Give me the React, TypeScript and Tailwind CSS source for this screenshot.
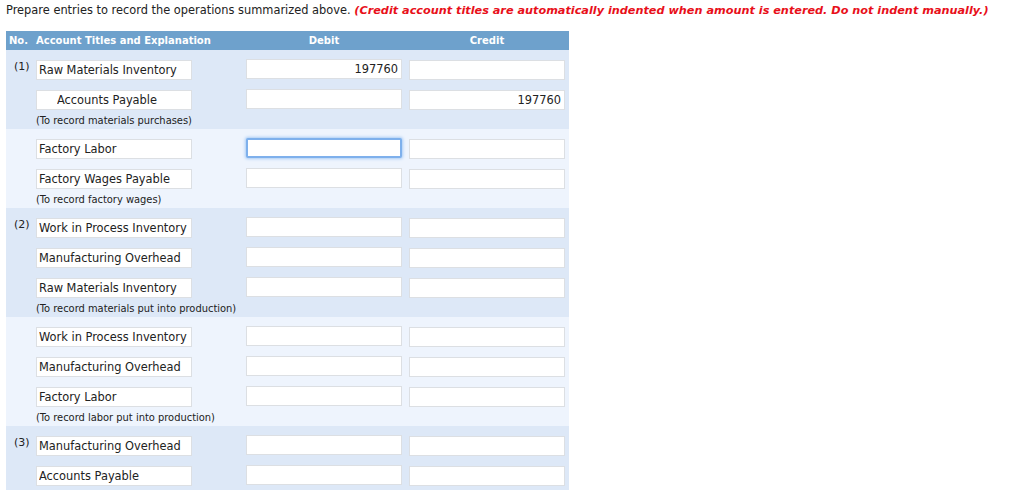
import React from "react";

interface EntryRow {
  title: string;
  indent?: boolean;
  debit?: string;
  credit?: string;
  focusDebit?: boolean;
}

interface EntryGroup {
  no?: string;
  rows: EntryRow[];
  note?: string;
}

const groups: EntryGroup[] = [
  {
    no: "(1)",
    rows: [
      { title: "Raw Materials Inventory", debit: "197760" },
      { title: "Accounts Payable", indent: true, credit: "197760" },
    ],
    note: "(To record materials purchases)",
  },
  {
    rows: [{ title: "Factory Labor", focusDebit: true }, { title: "Factory Wages Payable" }],
    note: "(To record factory wages)",
  },
  {
    no: "(2)",
    rows: [
      { title: "Work in Process Inventory" },
      { title: "Manufacturing Overhead" },
      { title: "Raw Materials Inventory" },
    ],
    note: "(To record materials put into production)",
  },
  {
    rows: [
      { title: "Work in Process Inventory" },
      { title: "Manufacturing Overhead" },
      { title: "Factory Labor" },
    ],
    note: "(To record labor put into production)",
  },
  {
    no: "(3)",
    rows: [{ title: "Manufacturing Overhead" }, { title: "Accounts Payable" }],
  },
];

const verdana = "font-['DejaVu_Sans',Verdana,sans-serif]";

function Field({ value, right, indent, focus }: { value?: string; right?: boolean; indent?: boolean; focus?: boolean }) {
  return (
    <input
      readOnly
      value={value ?? ""}
      className={
        "h-[20px] w-[156px] bg-white text-[11.4px] text-[#222] outline-none " +
        verdana +
        (right ? " text-right pr-[3px]" : indent ? " pl-[20px]" : " pl-[2px]") +
        (focus
          ? " border-2 border-[#7eb0ec] shadow-[0_0_3px_1px_#a9ccf5] rounded-[2px]"
          : " border border-[#dcdfe3]")
      }
    />
  );
}

export default function App() {
  return (
    <div className={"bg-white w-[1024px] h-[491px] overflow-hidden text-[#222] " + verdana}>
      <p className="pl-[6px] pt-[2px] h-[31px] text-[11.4px] leading-[16px] whitespace-nowrap">
        Prepare entries to record the operations summarized above.{" "}
        <span className="text-[#e8101a] text-[11.25px] font-bold italic">
          (Credit account titles are automatically indented when amount is entered. Do not indent manually.)
        </span>
      </p>

      <div className="ml-[6px] w-[563px]">
        {/* header */}
        <div className="flex h-[19px] items-center bg-[#6ea1cc] text-white text-[10px] font-bold">
          <div className="w-[30px] pl-[3px]">No.</div>
          <div className="w-[210px]">Account Titles and Explanation</div>
          <div className="w-[156px] text-center">Debit</div>
          <div className="ml-[7px] w-[156px] text-center">Credit</div>
        </div>

        {groups.map((g, gi) => (
          <div key={gi} className={"pt-[4px] " + (gi % 2 === 0 ? "bg-[#dde8f7]" : "bg-[#eef4fd]")}>
            {g.rows.map((r, ri) => (
              <div key={ri} className="flex h-[30px] items-center">
                <div className="w-[30px] self-start pt-[6px] pl-[8px] text-[11px] leading-[14px]">
                  {ri === 0 ? g.no : ""}
                </div>
                <div className="w-[210px]">
                  <Field value={r.title} indent={r.indent} />
                </div>
                <Field value={r.debit} right focus={r.focusDebit} />
                <div className="ml-[7px]">
                  <Field value={r.credit} right />
                </div>
              </div>
            ))}
            {g.note && (
              <div className="h-[15px] pl-[30px] text-[11px] leading-[13px] whitespace-nowrap font-['DejaVu_Sans_Condensed','Liberation_Sans',sans-serif]">
                {g.note}
              </div>
            )}
          </div>
        ))}
      </div>
    </div>
  );
}
